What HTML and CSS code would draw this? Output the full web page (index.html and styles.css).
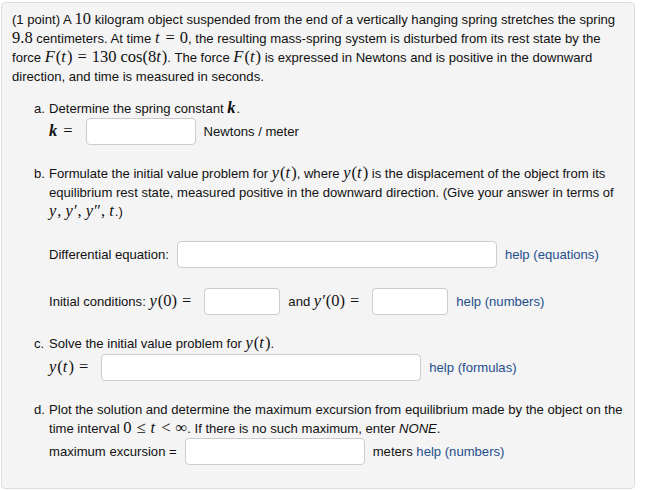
FILE: index.html
```html
<!DOCTYPE html>
<html>
<head>
<meta charset="utf-8">
<link rel="stylesheet" href="styles.css">
</head>
<body>
<div class="problem">
  <p class="intro">(1 point) A <span class="m">10</span> kilogram object suspended from the end of a vertically hanging spring stretches the spring <span class="m">9.8</span> centimeters. At time <span class="m"><i>t</i><span class="eq">=</span>0</span>, the resulting mass-spring system is disturbed from its rest state by the force <span class="m"><i>F</i>(<i>t</i>)<span class="eq">=</span>130<span class="fn">cos</span>(8<i>t</i>)</span>. The force <span class="m"><i>F</i>(<i>t</i>)</span> is expressed in Newtons and is positive in the downward direction, and time is measured in seconds.</p>

  <div class="part part-a">
    <div class="head"><span class="lbl">a.</span><span>Determine the spring constant <span class="m"><b><i>k</i></b></span>.</span></div>
    <div class="row">
      <span class="m"><b><i>k</i></b><span class="eq">=</span></span>
      <span class="box w110"></span>
      <span>Newtons / meter</span>
    </div>
  </div>

  <div class="part part-b">
    <div class="head"><span class="lbl">b.</span><span>Formulate the initial value problem for <span class="m"><i>y</i>(<i>t</i>)</span>, where <span class="m"><i>y</i>(<i>t</i>)</span> is the displacement of the object from its equilibrium rest state, measured positive in the downward direction. (Give your answer in terms of <span class="m"><i>y</i>, <i>y</i>&#8242;, <i>y</i>&#8243;, <i>t</i></span>.)</span></div>
    <div class="row row-de">
      <span>Differential equation:</span>
      <span class="box w320"></span>
      <a class="help">help (equations)</a>
    </div>
    <div class="row row-ic">
      <span>Initial conditions: <span class="m"><i>y</i>(0)<span class="eq">=</span></span></span>
      <span class="box w76"></span>
      <span>and <span class="m"><i>y</i>&#8242;(0)<span class="eq">=</span></span></span>
      <span class="box w76"></span>
      <a class="help">help (numbers)</a>
    </div>
  </div>

  <div class="part part-c">
    <div class="head"><span class="lbl">c.</span><span>Solve the initial value problem for <span class="m"><i>y</i>(<i>t</i>)</span>.</span></div>
    <div class="row row-c">
      <span class="m"><i>y</i>(<i>t</i>)<span class="eq">=</span></span>
      <span class="box w320"></span>
      <a class="help">help (formulas)</a>
    </div>
  </div>

  <div class="part part-d">
    <div class="head"><span class="lbl">d.</span><span>Plot the solution and determine the maximum excursion from equilibrium made by the object on the time interval <span class="m">0<span class="eq">&le;</span><i>t</i><span class="eq">&lt;</span>&infin;</span>. If there is no such maximum, enter <em>NONE</em>.</span></div>
    <div class="row row-d">
      <span>maximum excursion =</span>
      <span class="box w180"></span>
      <span>meters <a class="help">help (numbers)</a></span>
    </div>
  </div>
</div>
</body>
</html>
```

FILE: styles.css
```css
html, body {
  margin: 0;
  padding: 0;
  background: #ffffff;
}
body {
  font-family: "Liberation Sans", Arial, sans-serif;
  font-size: 13.1px;
  color: #111111;
  padding: 2px 0 0 1px;
}
.problem {
  box-sizing: border-box;
  width: 634px;
  height: 487px;
  background: #f4f4f4;
  border: 1px solid #dddddd;
  border-radius: 4px;
  padding: 7px 8px 0 10px;
  line-height: 19px;
}
.intro {
  margin: 0;
}
.m {
  font-family: "Liberation Serif", "Times New Roman", serif;
  font-size: 16.5px;
  line-height: 1;
  white-space: nowrap;
}
.m i {
  font-style: italic;
  margin-right: 1px;
}
.m b { font-weight: bold; }
.eq {
  margin: 0 5px;
}
.fn {
  margin-left: 4px;
}
.part {
  padding-left: 37px;
}
.head {
  display: flex;
}
.lbl {
  width: 15px;
  margin-left: -15px;
  flex: none;
}
.part-a { margin-top: 13px; }
.part-b { margin-top: 19px; }
.part-c { margin-top: 19px; }
.part-d { margin-top: 19px; }
.row {
  display: flex;
  align-items: center;
  gap: 8px;
  height: 27px;
}
.row-de { margin-top: 20px; }
.row-ic { margin-top: 20px; }
.row-c { margin-top: 1px; }
.box {
  display: inline-block;
  height: 25px;
  background: #ffffff;
  border: 1px solid #cccccc;
  border-radius: 4px;
  flex: none;
}
.w110 { width: 108px; }
.w320 { width: 318px; }
.w76 { width: 74px; }
.w180 { width: 178px; }
.help {
  color: #1f4e8c;
  text-decoration: none;
}
em { font-style: italic; }
```
